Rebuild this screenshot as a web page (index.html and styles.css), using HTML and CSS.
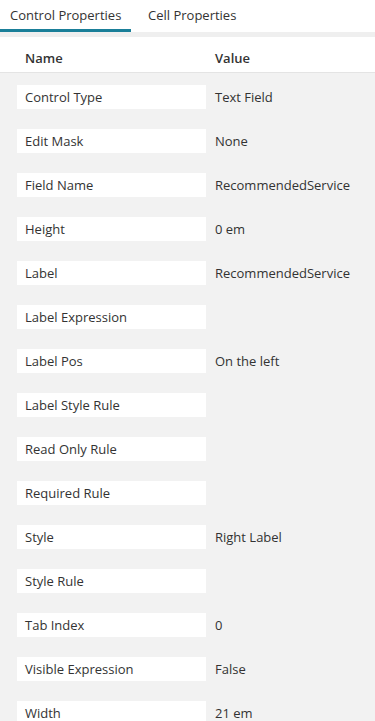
FILE: index.html
```html
<!DOCTYPE html>
<html lang="en">
<head>
    <title>Properties</title>
    <link rel="stylesheet" href="styles.css">
</head>
<body>
<div class="tabs">
    <div class="tab active">Control Properties</div>
    <div class="tab">Cell Properties</div>
</div>
<div class="strip"></div>
<div class="head">
    <span class="col_name">Name</span>
    <span class="col_value">Value</span>
</div>
<ul class="props">
    <li><span class="name">Control Type</span><span class="value">Text Field</span></li>
    <li><span class="name">Edit Mask</span><span class="value">None</span></li>
    <li><span class="name">Field Name</span><span class="value">RecommendedService</span></li>
    <li><span class="name">Height</span><span class="value">0 em</span></li>
    <li><span class="name">Label</span><span class="value">RecommendedService</span></li>
    <li><span class="name">Label Expression</span><span class="value"></span></li>
    <li><span class="name">Label Pos</span><span class="value">On the left</span></li>
    <li><span class="name">Label Style Rule</span><span class="value"></span></li>
    <li><span class="name">Read Only Rule</span><span class="value"></span></li>
    <li><span class="name">Required Rule</span><span class="value"></span></li>
    <li><span class="name">Style</span><span class="value">Right Label</span></li>
    <li><span class="name">Style Rule</span><span class="value"></span></li>
    <li><span class="name">Tab Index</span><span class="value">0</span></li>
    <li><span class="name">Visible Expression</span><span class="value">False</span></li>
    <li><span class="name">Width</span><span class="value">21 em</span></li>
</ul>
</body>
</html>
```
FILE: styles.css
```css
* {
    box-sizing: border-box;
    font-family: "Open Sans", Arial, sans-serif;
}

body {
    margin: 0;
    background-color: #f2f2f2;
    color: #333;
    font-size: 13px;
}

.tabs {
    display: flex;
    height: 32px;
    background-color: #fff;
}

.tab {
    padding: 6px 0 0 10px;
    width: 131px;
    line-height: 19px;
    white-space: nowrap;
    color: #333;
}

.tab + .tab {
    padding-left: 17px;
}

.tab.active {
    border-bottom: 3px solid #1a7f99;
}

.strip {
    height: 5px;
    background-color: #efefef;
}

.head {
    display: flex;
    align-items: center;
    height: 36px;
    padding: 6px 0 0 25px;
    background-color: #fff;
    border-bottom: 1px solid #e4e4e4;
    font-weight: 600;
}

.col_name {
    width: 190px;
}

.props {
    list-style-type: none;
    margin: 0;
    padding: 2px 0 0 17px;
}

.props li {
    display: flex;
    align-items: center;
    height: 44px;
}

.name {
    width: 189px;
    height: 24px;
    line-height: 24px;
    padding-left: 8px;
    background-color: #fff;
}

.value {
    padding-left: 9px;
}
```
